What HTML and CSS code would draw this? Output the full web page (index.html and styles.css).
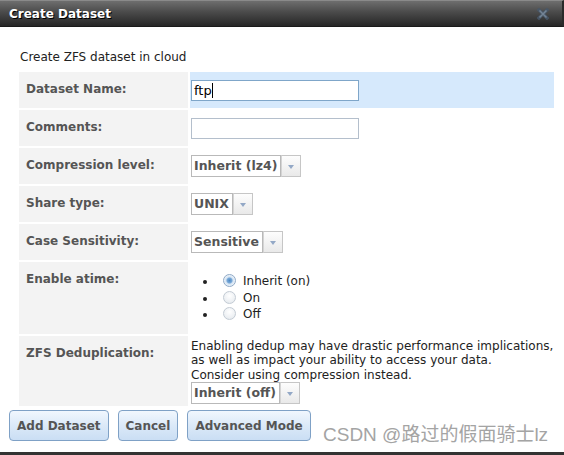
FILE: index.html
```html
<!DOCTYPE html>
<html>
<head>
<meta charset="utf-8">
<link rel="stylesheet" href="styles.css">
</head>
<body>
<div class="dialog">
  <div class="titlebar">
    <span class="title">Create Dataset</span>
    <span class="close"><svg width="12" height="12" viewBox="0 0 12 12"><path d="M2 2 L10 10 M10 2 L2 10" stroke="#48586a" stroke-width="3.4" stroke-linecap="square"/><path d="M2.5 2.5 L9.5 9.5 M9.5 2.5 L2.5 9.5" stroke="#7b8ea3" stroke-width="1.6"/></svg></span>
  </div>
  <div class="content">
    <p class="intro">Create ZFS dataset in cloud</p>
    <div class="form">
      <div class="label">Dataset Name:</div>
      <div class="value hl"><div class="textbox focus">ftp<span class="caret"></span></div></div>

      <div class="label">Comments:</div>
      <div class="value"><div class="textbox"></div></div>

      <div class="label">Compression level:</div>
      <div class="value"><div class="select"><span class="sel-text">Inherit (lz4)</span><span class="sel-btn"><span class="tri"></span></span></div></div>

      <div class="label">Share type:</div>
      <div class="value"><div class="select"><span class="sel-text">UNIX</span><span class="sel-btn"><span class="tri"></span></span></div></div>

      <div class="label">Case Sensitivity:</div>
      <div class="value"><div class="select"><span class="sel-text">Sensitive</span><span class="sel-btn"><span class="tri"></span></span></div></div>

      <div class="label">Enable atime:</div>
      <div class="value radios">
        <ul>
          <li><span class="radio checked"></span>Inherit (on)</li>
          <li><span class="radio"></span>On</li>
          <li><span class="radio"></span>Off</li>
        </ul>
      </div>

      <div class="label">ZFS Deduplication:</div>
      <div class="value dedup">
        <div class="note">Enabling dedup may have drastic performance implications,<br>as well as impact your ability to access your data.<br>Consider using compression instead.</div>
        <div class="select"><span class="sel-text">Inherit (off)</span><span class="sel-btn"><span class="tri"></span></span></div>
      </div>
    </div>
    <div class="buttons">
      <button class="btn">Add Dataset</button>
      <button class="btn">Cancel</button>
      <button class="btn">Advanced Mode</button>
    </div>
  </div>
  <div class="watermark">CSDN @路过的假面骑士lz</div>
</div>
</body>
</html>
```
FILE: styles.css
```css
html, body {
  margin: 0;
  padding: 0;
  background: #fff;
}
body {
  font-family: "DejaVu Sans", Verdana, sans-serif;
  font-size: 12px;
  color: #222;
}
.dialog {
  position: relative;
  width: 564px;
  height: 455px;
  box-sizing: border-box;
  border-bottom: 3px solid #333;
  overflow: hidden;
  background: #fff;
}
.titlebar {
  height: 27px;
  box-sizing: border-box;
  display: flex;
  align-items: center;
  justify-content: space-between;
  padding: 0 13px 0 9px;
  background: linear-gradient(#6e6e6e, #4a4a4a 45%, #262626);
  border-top: 1px solid #8a8a8a;
  border-bottom: 1px solid #1a1a1a;
  border-right: 2px solid #2a2a2a;
}
.title {
  color: #fff;
  font-weight: bold;
  font-size: 12px;
  text-shadow: 1px 1px 0 #000;
}
.close {
  display: flex;
  width: 12px;
  height: 12px;
  opacity: 0.85;
}
.content {
  padding-top: 23px;
}
.intro {
  margin: 0 0 7px 20px;
  line-height: 15px;
  color: #222;
}
.form {
  display: grid;
  grid-template-columns: 169px 364px;
  grid-auto-rows: minmax(36px, auto);
  gap: 2px;
  margin-left: 19px;
}
.label {
  background: #f3f3f3;
  font-weight: bold;
  color: #555;
  line-height: 15px;
  padding: 10px 7px 0;
}
.value {
  padding: 7px 0 7px 1px;
}
.value.hl {
  background: #d6e9fc;
}
.textbox {
  box-sizing: border-box;
  width: 168px;
  height: 21px;
  margin-top: 1px;
  border: 1px solid #b4bfcc;
  background: #fff;
  font-size: 13px;
  line-height: 19px;
  padding-left: 2px;
  color: #000;
}
.textbox.focus {
  border-color: #7fa6c9;
}
.caret {
  display: inline-block;
  width: 1px;
  height: 15px;
  background: #000;
  vertical-align: -3px;
}
.select {
  display: inline-flex;
  height: 22px;
  vertical-align: top;
}
.sel-text {
  box-sizing: border-box;
  height: 22px;
  border: 1px solid #b9b9b9;
  padding: 0 3px 0 2px;
  font-weight: bold;
  color: #555;
  font-size: 12.5px;
  line-height: 20px;
  background: #fff;
}
.sel-btn {
  box-sizing: border-box;
  width: 20px;
  height: 22px;
  border: 1px solid #c6c6c6;
  border-left: 1px solid #d4d4d4;
  background: linear-gradient(#fdfdfd, #e9e9e9);
  display: flex;
  align-items: center;
  justify-content: center;
}
.tri {
  width: 0;
  height: 0;
  border-left: 3.5px solid transparent;
  border-right: 3.5px solid transparent;
  border-top: 4px solid #93a8c6;
  margin-top: 1px;
}
.radios {
  padding: 11px 0 11px 1px;
}
.radios ul {
  margin: 0;
  padding-left: 26px;
  list-style: disc;
  color: #222;
}
.radios li {
  line-height: 16.5px;
  height: 16.5px;
}
.radio {
  display: inline-block;
  box-sizing: border-box;
  width: 13px;
  height: 13px;
  margin: 0 7px 0 6px;
  border-radius: 50%;
  border: 1px solid #c3cbd4;
  background: radial-gradient(circle at 50% 35%, #ffffff, #eef1f4 60%, #dfe4ea);
  vertical-align: -2px;
}
.radio.checked {
  border-color: #8fa9c6;
  background: radial-gradient(circle at 50% 50%, #4f8ac4 0, #7aa9d8 2.5px, #d2e2f2 3.5px, #f4f8fc 6px);
}
.dedup {
  padding: 3px 0 2px 1px;
}
.note {
  line-height: 14.5px;
  color: #222;
}
.buttons {
  display: flex;
  gap: 9px;
  margin: 4px 0 0 9px;
}
.btn {
  height: 31px;
  padding: 0 7px;
  border: 1px solid #7fa1c6;
  border-radius: 4px;
  background: linear-gradient(#f1f7fe, #dbe9f8 50%, #cadef4);
  font-family: "DejaVu Sans", Verdana, sans-serif;
  font-size: 12px;
  font-weight: bold;
  color: #555;
}
.watermark {
  position: absolute;
  left: 323px;
  top: 423px;
  font-family: "Liberation Sans", "Noto Sans CJK SC", sans-serif;
  font-size: 19px;
  line-height: 23px;
  color: #a4a4a4;
  white-space: nowrap;
  text-shadow: 0 0 1px #fff;
}
```
